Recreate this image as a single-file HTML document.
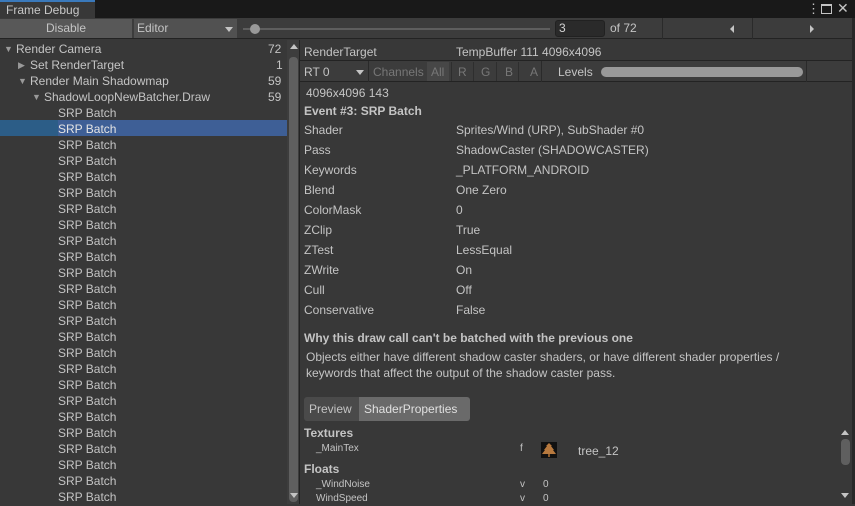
<!DOCTYPE html>
<html><head><style>
*{margin:0;padding:0;box-sizing:border-box}
body{width:855px;height:504px;overflow:hidden;background:#383838;font-family:"Liberation Sans",sans-serif;font-size:12px;color:#c4c4c4;position:relative}
.a{position:absolute;white-space:nowrap}
.row{position:absolute;left:0;width:287px;height:16px;line-height:18px}
.lbl{position:absolute;left:304px}
.val{position:absolute;left:456px}
</style></head><body>
<div class="a" style="left:0;top:0;width:855px;height:18px;background:#191919"></div>
<div class="a" style="left:0;top:0;width:95px;height:18px;background:#383838;border-top:2px solid #3a79bb;padding-left:6px;line-height:16px;color:#c8c8c8">Frame Debug</div>
<div class="a" style="left:807px;top:1px;color:#c4c4c4;font-size:13px">⋮</div>
<div class="a" style="left:821px;top:4px;width:11px;height:10px;border:1px solid #c4c4c4;border-top-width:2px"></div>
<div class="a" style="left:837px;top:0px;color:#c4c4c4;font-size:14px">✕</div>
<div class="a" style="left:0;top:18px;width:855px;height:21px;background:#3c3c3c;border-bottom:1px solid #232323"></div>
<div class="a" style="left:0;top:19px;width:132px;height:19px;background:#585858;text-align:center;line-height:19px">Disable</div>
<div class="a" style="left:134px;top:19px;width:103px;height:19px;background:#515151;padding-left:3px;line-height:19px">Editor</div>
<div class="a" style="left:225px;top:27px;border-left:4px solid transparent;border-right:4px solid transparent;border-top:5px solid #c4c4c4"></div>
<div class="a" style="left:243px;top:28px;width:307px;height:2px;background:#5e5e5e"></div>
<div class="a" style="left:250px;top:24px;width:10px;height:10px;border-radius:50%;background:#999"></div>
<div class="a" style="left:555px;top:20px;width:50px;height:17px;background:#2a2a2a;border:1px solid #212121;border-radius:3px;padding-left:3px;line-height:15px;color:#d2d2d2">3</div>
<div class="a" style="left:610px;top:19px;line-height:19px">of 72</div>
<div class="a" style="left:662px;top:18px;width:1px;height:21px;background:#2a2a2a"></div>
<div class="a" style="left:752px;top:18px;width:1px;height:21px;background:#2a2a2a"></div>
<div class="a" style="left:730px;top:25px;border-top:4px solid transparent;border-bottom:4px solid transparent;border-right:4px solid #c4c4c4"></div>
<div class="a" style="left:810px;top:25px;border-top:4px solid transparent;border-bottom:4px solid transparent;border-left:4px solid #c4c4c4"></div>
<div class="a" style="left:287px;top:40px;width:13px;height:464px;background:#3d3d3d"></div>
<div class="a" style="left:289px;top:57px;width:9px;height:445px;background:#5f5f5f;border-radius:4px"></div>
<div class="a" style="left:290px;top:44px;border-left:4px solid transparent;border-right:4px solid transparent;border-bottom:5px solid #c4c4c4"></div>
<div class="a" style="left:299px;top:40px;width:1px;height:464px;background:#232323"></div>
<div class="row" style="top:40px"><span class="a" style="left:4px;font-size:9px;color:#999">▼</span><span class="a" style="left:16px">Render Camera</span><span class="a" style="left:268px">72</span></div>
<div class="row" style="top:56px"><span class="a" style="left:18px;font-size:9px;color:#999">▶</span><span class="a" style="left:30px">Set RenderTarget</span><span class="a" style="left:276px">1</span></div>
<div class="row" style="top:72px"><span class="a" style="left:18px;font-size:9px;color:#999">▼</span><span class="a" style="left:30px">Render Main Shadowmap</span><span class="a" style="left:268px">59</span></div>
<div class="row" style="top:88px"><span class="a" style="left:32px;font-size:9px;color:#999">▼</span><span class="a" style="left:44px">ShadowLoopNewBatcher.Draw</span><span class="a" style="left:268px">59</span></div>
<div class="row" style="top:104px"><span class="a" style="left:58px">SRP Batch</span></div>
<div class="row" style="top:120px;background:#3e5f96"><span class="a" style="left:0;top:0;width:58px;height:16px;background:#2c5d87"></span><span class="a" style="left:58px;color:#e4e4e4">SRP Batch</span></div>
<div class="row" style="top:136px"><span class="a" style="left:58px">SRP Batch</span></div>
<div class="row" style="top:152px"><span class="a" style="left:58px">SRP Batch</span></div>
<div class="row" style="top:168px"><span class="a" style="left:58px">SRP Batch</span></div>
<div class="row" style="top:184px"><span class="a" style="left:58px">SRP Batch</span></div>
<div class="row" style="top:200px"><span class="a" style="left:58px">SRP Batch</span></div>
<div class="row" style="top:216px"><span class="a" style="left:58px">SRP Batch</span></div>
<div class="row" style="top:232px"><span class="a" style="left:58px">SRP Batch</span></div>
<div class="row" style="top:248px"><span class="a" style="left:58px">SRP Batch</span></div>
<div class="row" style="top:264px"><span class="a" style="left:58px">SRP Batch</span></div>
<div class="row" style="top:280px"><span class="a" style="left:58px">SRP Batch</span></div>
<div class="row" style="top:296px"><span class="a" style="left:58px">SRP Batch</span></div>
<div class="row" style="top:312px"><span class="a" style="left:58px">SRP Batch</span></div>
<div class="row" style="top:328px"><span class="a" style="left:58px">SRP Batch</span></div>
<div class="row" style="top:344px"><span class="a" style="left:58px">SRP Batch</span></div>
<div class="row" style="top:360px"><span class="a" style="left:58px">SRP Batch</span></div>
<div class="row" style="top:376px"><span class="a" style="left:58px">SRP Batch</span></div>
<div class="row" style="top:392px"><span class="a" style="left:58px">SRP Batch</span></div>
<div class="row" style="top:408px"><span class="a" style="left:58px">SRP Batch</span></div>
<div class="row" style="top:424px"><span class="a" style="left:58px">SRP Batch</span></div>
<div class="row" style="top:440px"><span class="a" style="left:58px">SRP Batch</span></div>
<div class="row" style="top:456px"><span class="a" style="left:58px">SRP Batch</span></div>
<div class="row" style="top:472px"><span class="a" style="left:58px">SRP Batch</span></div>
<div class="row" style="top:488px"><span class="a" style="left:58px">SRP Batch</span></div>
<div class="a" style="left:300px;top:40px;width:555px;height:21px;border-bottom:1px solid #232323"></div>
<div class="a lbl" style="top:45px">RenderTarget</div>
<div class="a val" style="top:45px">TempBuffer 111 4096x4096</div>
<div class="a" style="left:300px;top:61px;width:555px;height:21px;background:#3c3c3c;border-bottom:1px solid #232323"></div>
<div class="a" style="left:304px;top:65px">RT 0</div>
<div class="a" style="left:356px;top:70px;border-left:4px solid transparent;border-right:4px solid transparent;border-top:5px solid #c4c4c4"></div>
<div class="a" style="left:368px;top:61px;width:1px;height:21px;background:#2a2a2a"></div>
<div class="a" style="left:373px;top:65px;color:#777">Channels</div>
<div class="a" style="left:427px;top:62px;width:22px;height:19px;background:#474747"></div>
<div class="a" style="left:431px;top:65px;color:#777">All</div>
<div class="a" style="left:458px;top:65px;color:#777">R</div>
<div class="a" style="left:481px;top:65px;color:#777">G</div>
<div class="a" style="left:505px;top:65px;color:#777">B</div>
<div class="a" style="left:530px;top:65px;color:#777">A</div>
<div class="a" style="left:451px;top:62px;width:1px;height:19px;background:#2e2e2e"></div>
<div class="a" style="left:473px;top:62px;width:1px;height:19px;background:#2e2e2e"></div>
<div class="a" style="left:496px;top:62px;width:1px;height:19px;background:#2e2e2e"></div>
<div class="a" style="left:518px;top:62px;width:1px;height:19px;background:#2e2e2e"></div>
<div class="a" style="left:541px;top:61px;width:1px;height:21px;background:#2a2a2a"></div>
<div class="a" style="left:558px;top:65px">Levels</div>
<div class="a" style="left:601px;top:67px;width:202px;height:10px;background:#999;border-radius:5px"></div>
<div class="a" style="left:806px;top:61px;width:1px;height:21px;background:#2a2a2a"></div>
<div class="a" style="left:306px;top:86px">4096x4096 143</div>
<div class="a" style="left:304px;top:104px;font-weight:bold">Event #3: SRP Batch</div>
<div class="a lbl" style="top:123px">Shader</div><div class="a val" style="top:123px">Sprites/Wind (URP), SubShader #0</div>
<div class="a lbl" style="top:143px">Pass</div><div class="a val" style="top:143px">ShadowCaster (SHADOWCASTER)</div>
<div class="a lbl" style="top:163px">Keywords</div><div class="a val" style="top:163px">_PLATFORM_ANDROID</div>
<div class="a lbl" style="top:183px">Blend</div><div class="a val" style="top:183px">One Zero</div>
<div class="a lbl" style="top:203px">ColorMask</div><div class="a val" style="top:203px">0</div>
<div class="a lbl" style="top:223px">ZClip</div><div class="a val" style="top:223px">True</div>
<div class="a lbl" style="top:243px">ZTest</div><div class="a val" style="top:243px">LessEqual</div>
<div class="a lbl" style="top:263px">ZWrite</div><div class="a val" style="top:263px">On</div>
<div class="a lbl" style="top:283px">Cull</div><div class="a val" style="top:283px">Off</div>
<div class="a lbl" style="top:303px">Conservative</div><div class="a val" style="top:303px">False</div>
<div class="a" style="left:304px;top:331px;font-weight:bold">Why this draw call can't be batched with the previous one</div>
<div class="a" style="left:306px;top:349px;line-height:16px">Objects either have different shadow caster shaders, or have different shader properties /<br>keywords that affect the output of the shadow caster pass.</div>
<div class="a" style="left:304px;top:397px;width:55px;height:24px;background:#4a4a4a;border-radius:3px 0 0 3px;line-height:24px;padding-left:5px">Preview</div>
<div class="a" style="left:359px;top:397px;width:111px;height:24px;background:#6a6a6a;border-radius:0 3px 3px 0;line-height:24px;padding-left:5px;color:#e0e0e0">ShaderProperties</div>
<div class="a" style="left:852px;top:398px;width:3px;height:22px;background:#555"></div>
<div class="a" style="left:838px;top:422px;width:14px;height:82px;background:#383838"></div>
<div class="a" style="left:841px;top:430px;border-left:4px solid transparent;border-right:4px solid transparent;border-bottom:5px solid #c4c4c4"></div>
<div class="a" style="left:841px;top:439px;width:9px;height:26px;background:#5f5f5f;border-radius:4px"></div>
<div class="a" style="left:841px;top:493px;border-left:4px solid transparent;border-right:4px solid transparent;border-top:5px solid #c4c4c4"></div>
<div class="a" style="left:290px;top:493px;border-left:4px solid transparent;border-right:4px solid transparent;border-top:5px solid #c4c4c4"></div>
<div class="a" style="left:304px;top:426px;font-weight:bold">Textures</div>
<div class="a" style="left:316px;top:443px;font-size:10px">_MainTex</div>
<div class="a" style="left:520px;top:443px;font-size:10px">f</div>
<div class="a" style="left:541px;top:442px;width:16px;height:16px;background:#111"></div>
<svg class="a" style="left:541px;top:442px" width="16" height="16"><path d="M8 1 L11 4 L10 4 L13 8 L12 8 L15 12 L1 12 L4 8 L3 8 L6 4 L5 4 Z" fill="#b7793e"/><rect x="7" y="12" width="2" height="3" fill="#8a5a2c"/></svg>
<div class="a" style="left:578px;top:444px">tree_12</div>
<div class="a" style="left:304px;top:462px;font-weight:bold">Floats</div>
<div class="a" style="left:316px;top:479px;font-size:10px">_WindNoise</div>
<div class="a" style="left:520px;top:479px;font-size:10px">v</div>
<div class="a" style="left:543px;top:479px;font-size:10px">0</div>
<div class="a" style="left:316px;top:493px;font-size:10px">WindSpeed</div>
<div class="a" style="left:520px;top:493px;font-size:10px">v</div>
<div class="a" style="left:543px;top:493px;font-size:10px">0</div>
<div class="a" style="left:852px;top:18px;width:3px;height:486px;background:#282828"></div>
</body></html>
